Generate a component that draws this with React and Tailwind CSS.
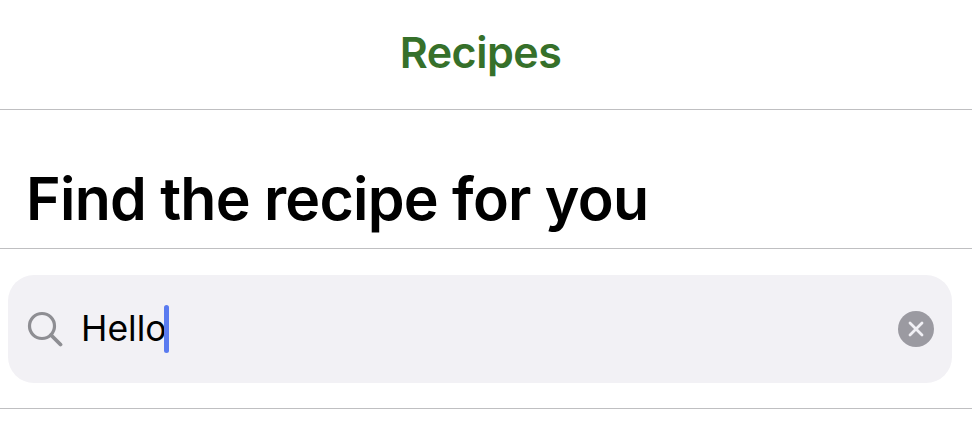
import React from 'react';

const App = () => {
    return (
        <div className="w-[972px] h-[438px] overflow-hidden bg-white font-['Inter','Liberation_Sans',sans-serif]">
            {/* Nav bar */}
            <div className="h-[110px] border-b border-[#bfbfc1] flex justify-center pt-[25px] pr-[11px]">
                <span className="text-[43px] leading-[54px] font-semibold text-[#36702a] tracking-[-0.5px]">Recipes</span>
            </div>

            {/* Large title */}
            <div className="h-[139px] border-b border-[#bfbfc1] pl-[26px] pt-[54px]">
                <h1 className="text-[59px] leading-[70px] font-semibold text-black tracking-[-0.75px]">Find the recipe for you</h1>
            </div>

            {/* Search field */}
            <div className="h-[160px] border-b border-[#bfbfc1] pl-[8px] pr-[20px] pt-[26px]">
                <div className="h-[108px] rounded-[26px] bg-[#f2f1f5] flex items-center pl-[19px] pr-[18px]">
                    <svg width="36" height="36" viewBox="0 0 36 36" fill="none" className="shrink-0">
                        <circle cx="15" cy="15" r="12.5" stroke="#8e8e93" strokeWidth="3.2" />
                        <path d="M24 24L33.5 33.5" stroke="#8e8e93" strokeWidth="3.8" strokeLinecap="round" />
                    </svg>
                    <span className="ml-[18px] text-[35.5px] leading-[46px] text-black">Hello</span>
                    <div className="w-[5px] h-[48px] rounded-full bg-[#5a7bf0] -ml-[3px]"></div>
                    <div className="ml-auto w-[36px] h-[36px] rounded-full bg-[#9b9aa1] flex items-center justify-center">
                        <svg width="16" height="16" viewBox="0 0 16 16" fill="none">
                            <path d="M2 2L14 14M14 2L2 14" stroke="#f1f0f5" strokeWidth="2.8" strokeLinecap="round" />
                        </svg>
                    </div>
                </div>
            </div>
        </div>
    );
};

export default App;
